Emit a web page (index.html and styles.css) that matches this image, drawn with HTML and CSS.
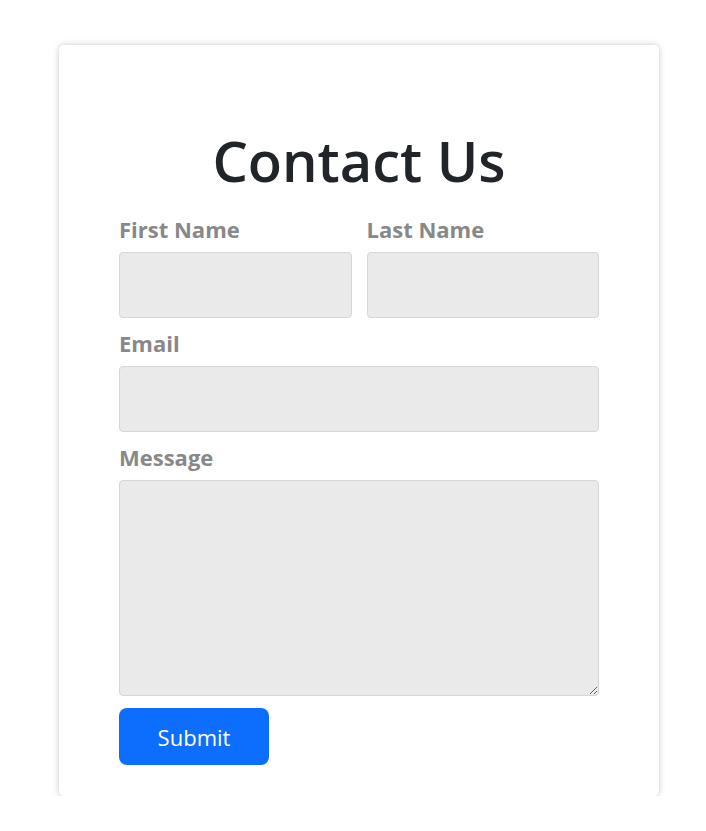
FILE: index.html
```html
<!DOCTYPE html>
<html>
<head>
<meta charset="utf-8">
<link rel="stylesheet" href="styles.css">
</head>
<body>
<div class="page">
  <form class="card">
    <h1 class="title">Contact Us</h1>
    <div class="row">
      <div class="field">
        <label class="label">First Name</label>
        <input class="input" type="text">
      </div>
      <div class="field">
        <label class="label">Last Name</label>
        <input class="input" type="text">
      </div>
    </div>
    <div class="field">
      <label class="label">Email</label>
      <input class="input" type="text">
    </div>
    <div class="field">
      <label class="label">Message</label>
      <textarea class="input textarea"></textarea>
    </div>
    <div class="actions">
      <button class="submit" type="button">Submit</button>
    </div>
  </form>
</div>
</body>
</html>
```
FILE: styles.css
```css
html, body {
  margin: 0;
  padding: 0;
  background: #ffffff;
}
body {
  font-family: "Open Sans", "Noto Sans", "Liberation Sans", sans-serif;
  color: #212529;
}
.page {
  padding: 45px 0 0 59px;
}
.card {
  box-sizing: border-box;
  width: 600px;
  height: 751px;
  padding: 0 60px;
  background: #fff;
  border-radius: 5px;
  box-shadow: 0 0 6px rgba(0,0,0,0.22);
  display: flex;
  flex-direction: column;
}
.title {
  margin: 75px 0 4px 0;
  font-size: 56px;
  font-weight: 600;
  line-height: 80px;
  text-align: center;
  color: #212529;
}
.row {
  display: flex;
  gap: 15px;
}
.row .field {
  flex: 1;
}
.field {
  display: flex;
  flex-direction: column;
}
.label {
  font-size: 22px;
  font-weight: 700;
  color: #888888;
  line-height: 34px;
  margin: 8px 0 6px 0;
}
.input {
  box-sizing: border-box;
  height: 66px;
  width: 100%;
  background: #eaeaea;
  border: 1px solid #d6d6d6;
  border-radius: 4px;
  margin: 0;
}
.textarea {
  height: 216px;
  resize: vertical;
}
.actions {
  margin-top: 12px;
}
.submit {
  width: 150px;
  height: 57px;
  background: #0d6efd;
  color: #fff;
  border: none;
  border-radius: 8px;
  font-family: "Open Sans", "Noto Sans", sans-serif;
  font-size: 22px;
}
```
